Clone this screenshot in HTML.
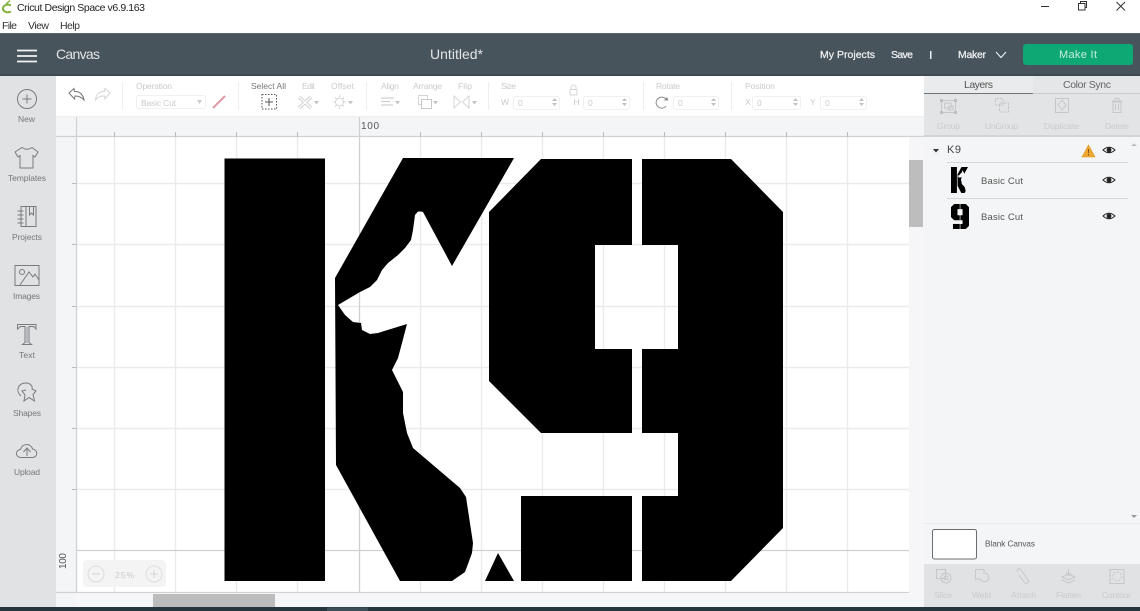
<!DOCTYPE html>
<html><head><meta charset="utf-8"><title>Cricut Design Space</title>
<style>
html,body{margin:0;padding:0;width:1140px;height:611px;overflow:hidden;background:#fff}
svg{display:block;font-family:"Liberation Sans",sans-serif;filter:blur(.35px)}
.d{fill:#c9cacc;font-size:8.5px}
.s{fill:#777;font-size:8.5px}
.g{fill:none;stroke:#ebebed;stroke-width:1.4}
.i{fill:none;stroke:#787c7f;stroke-width:1}
.f{fill:none;stroke:#d4d5d7;stroke-width:1}
.b{fill:none;stroke:#c6c7c9;stroke-width:1}
.m{font-size:10.500px;fill:#f0f1f1;stroke:#f0f1f1;stroke-width:.25}
</style></head><body>
<svg width="1140" height="611" viewBox="0 0 1140 611" xmlns="http://www.w3.org/2000/svg">
<rect width="1140" height="611" fill="#fff"/>

<!-- title bar -->
<path d="M11 5.500C7 3.500 3 5.500 3 8.500S7 13.500 11 11.500" fill="none" stroke="#7fb13a" stroke-width="2"/>
<path d="M6 4L10 .5" stroke="#7fb13a" stroke-width="1.400"/>
<text x="17" y="11" font-size="10.500" fill="#222" textLength="128" lengthAdjust="spacing">Cricut Design Space  v6.9.163</text>
<text x="2" y="29" font-size="10.500" fill="#333" textLength="15">File</text>
<text x="28" y="29" font-size="10.500" fill="#333" textLength="21">View</text>
<text x="60" y="29" font-size="10.500" fill="#333" textLength="20">Help</text>
<path d="M1041 6.500H1049" stroke="#333" stroke-width="1"/>
<rect x="1078.500" y="3.500" width="6.500" height="6.500" fill="none" stroke="#333"/>
<path d="M1080.500 3.500V1.500H1086.500V7.500H1085" fill="none" stroke="#333"/>
<path d="M1116.500 2L1125 10.500M1125 2L1116.500 10.500" stroke="#333" stroke-width="1"/>

<!-- header -->
<rect x="0" y="33" width="1140" height="43" fill="#47545c"/>
<rect x="0" y="33" width="1140" height="1" fill="#5a666d"/>
<rect x="0" y="74.500" width="1140" height="1" fill="#333f46"/>
<path d="M17 50.500H37M17 56H37M17 61.500H37" stroke="#f1f2f2" stroke-width="1.800"/>
<text x="56" y="59" font-size="14" fill="#e2e5e6" textLength="44">Canvas</text>
<text x="430" y="59" font-size="14" fill="#e2e5e6" textLength="53">Untitled*</text>
<text x="820" y="58" class="m" textLength="55">My Projects</text>
<text x="891" y="58" class="m" textLength="22">Save</text>
<rect x="930" y="51" width="1.500" height="8" fill="#eef0f0"/>
<text x="958" y="58" class="m" textLength="28">Maker</text>
<path d="M996 52L1001 57.500L1006 52" fill="none" stroke="#eef0f0" stroke-width="1.100"/>
<rect x="1023" y="44" width="110" height="21" rx="3" fill="#0da873"/>
<text x="1059" y="58" font-size="11" fill="#c9eddd" textLength="38">Make It</text>

<!-- left sidebar -->
<rect x="0" y="76" width="56" height="531" fill="#e1e2e4"/>
<circle cx="27" cy="99" r="9.500" class="i"/>
<path d="M27 94.500V103.500M22.500 99H31.500" class="i"/>
<text x="18" y="122" class="s" textLength="17">New</text>

<path d="M15 152L22 147.500Q27 151 32 147.500L38 152L35 157L33 155.500V168H20V155.500L18 157Z" class="i"/>
<text x="8" y="181" class="s" textLength="38">Templates</text>

<rect x="21" y="206.500" width="15" height="20" class="i"/>
<path d="M26 206.500V226.500M17.500 211H23.500M17.500 215H23.500M17.500 219H23.500M17.500 223H23.500M29.500 207V215L31.500 213L33.500 215V207" class="i"/>
<text x="12" y="240" class="s" textLength="30">Projects</text>

<rect x="15" y="265.500" width="24" height="20" class="i"/>
<circle cx="22" cy="272" r="2.500" class="i"/>
<path d="M20 285L29 272L33 277L35 274L39 280" class="i"/>
<text x="13" y="299" class="s" textLength="27">Images</text>

<path d="M17.500 329V324.500H36V329L33.500 326.500H29V342.500L31.500 344.500H22.500L25 342.500V326.500H20.500Z" class="i"/>
<path d="M27 327V343" stroke="#787c7f" stroke-width=".8"/>
<text x="19" y="358" class="s" textLength="16">Text</text>

<path d="M21 396C15 391 18 383 26 383C30 383 33 386 32 389L36 391L33 394.500L34.500 401L29 397.500L24 401L25 395L22 391L26 390" class="i"/>
<text x="13" y="416" class="s" textLength="28">Shapes</text>

<path d="M21 457.500C15 457.500 15 450 20.500 449.500C22 443 31 443 32.500 449C38 449.500 38.500 457.500 32 457.500Z" class="i"/>
<path d="M27 456V449M23.500 452L27 448L30.500 452" class="i"/>
<text x="14" y="475" class="s" textLength="26">Upload</text>

<!-- toolbar -->
<rect x="56" y="76" width="868" height="41" fill="#fff"/>
<path d="M69 93L74 88.500L74.500 91.500C79 91 83 94 84 100C81 96.500 78 96 75 96L74.500 99Z" fill="none" stroke="#777" stroke-width="1"/>
<path d="M110 93L105 88.500L104.500 91.500C100 91 96 94 95.500 100C98 96.500 101 96 104.500 96L105 99Z" class="f"/>
<path d="M122.500 82V110M238.500 82V110M366.500 82V110M488.500 82V110M643.500 82V110M731.500 82V110" stroke="#eeeeef" stroke-width="1"/>

<text x="136" y="89" class="d" textLength="36">Operation</text>
<rect x="136.500" y="95.500" width="69" height="13" rx="2" fill="#fff" stroke="#f0f0f0"/>
<text x="141" y="106" class="d" textLength="35">Basic Cut</text>
<path d="M197 100H202L199.500 104Z" fill="#ccc"/>
<path d="M213 108L225 96" stroke="#e09aa4" stroke-width="2"/>

<text x="251" y="89" class="s" textLength="35">Select All</text>
<rect x="262" y="94.500" width="14.500" height="14.500" fill="none" stroke="#555" stroke-width="1" stroke-dasharray="1.500 1.500"/>
<path d="M269 98V106M265 102H273" stroke="#555" stroke-width="1"/>

<text x="302" y="89" class="d" textLength="13">Edit</text>
<path d="M299 97L311 108M311 97L299 108" stroke="#cfd0d2" stroke-width="3.500"/>
<path d="M299 97L311 108M311 97L299 108" stroke="#fff" stroke-width="1.500"/>
<path d="M314 101H319L316.500 104.500Z" fill="#c4c5c7"/>
<text x="331" y="89" class="d" textLength="23">Offset</text>
<circle cx="339.500" cy="102" r="4" class="f"/>
<path d="M339.500 95V97M339.500 107V109M333 102H335M344 102H346M335 97.500L336.500 99M342.500 105L344 106.500M344 97.500L342.500 99M336.500 105L335 106.500" class="f"/>
<path d="M348 101H353L350.500 104.500Z" fill="#c4c5c7"/>

<text x="381" y="89" class="d" textLength="18">Align</text>
<path d="M381 98H394M381 101.500H390M381 105H393" stroke="#cfd0d2" stroke-width="1.300"/>
<path d="M395 101H400L397.500 104.500Z" fill="#c4c5c7"/>
<text x="413" y="89" class="d" textLength="29">Arrange</text>
<rect x="418.500" y="95.500" width="9" height="9" class="f"/>
<rect x="421.500" y="99.500" width="10" height="9" fill="#fff" stroke="#c6c7c9"/>
<path d="M433 101H438L435.500 104.500Z" fill="#c4c5c7"/>
<text x="458" y="89" class="d" textLength="14">Flip</text>
<path d="M454 96V108L460.500 102ZM469 96V108L462.500 102Z" class="f"/>
<path d="M472 101H477L474.500 104.500Z" fill="#c4c5c7"/>

<text x="501" y="89" class="d" textLength="15">Size</text>
<text x="501" y="105" class="d" textLength="7">W</text>
<rect x="513.500" y="96.500" width="46" height="13" rx="2" fill="#fff" stroke="#f0f0f0"/>
<text x="518" y="106" class="d">0</text>
<path d="M552 101L554.500 98L557 101ZM552 103L554.500 106L557 103Z" fill="#c0c1c3"/>
<rect x="570" y="89.500" width="7" height="5.500" rx="1" class="f"/>
<path d="M571 89.500V87.500A2.500 2.500 0 0 1 576 87.500V89.500" class="f"/>
<text x="573.500" y="105" class="d">H</text>
<rect x="583.500" y="96.500" width="46" height="13" rx="2" fill="#fff" stroke="#f0f0f0"/>
<text x="588" y="106" class="d">0</text>
<path d="M622 101L624.500 98L627 101ZM622 103L624.500 106L627 103Z" fill="#c0c1c3"/>

<text x="656" y="89" class="d" textLength="24">Rotate</text>
<path d="M666 106A5.500 5.500 0 1 1 666.500 100" fill="none" stroke="#8a8c8e" stroke-width="1"/>
<path d="M664 100.500L668.500 100.500L667 97Z" fill="#8a8c8e"/>
<rect x="673.500" y="96.500" width="45" height="13" rx="2" fill="#fff" stroke="#f0f0f0"/>
<text x="678" y="106" class="d">0</text>
<path d="M711 101L713.500 98L716 101ZM711 103L713.500 106L716 103Z" fill="#c0c1c3"/>

<text x="745" y="89" class="d" textLength="30">Position</text>
<text x="745" y="105" class="d">X</text>
<rect x="752.500" y="96.500" width="48" height="13" rx="2" fill="#fff" stroke="#f0f0f0"/>
<text x="757" y="106" class="d">0</text>
<path d="M793 101L795.500 98L798 101ZM793 103L795.500 106L798 103Z" fill="#c0c1c3"/>
<text x="810" y="105" class="d">Y</text>
<rect x="820.500" y="96.500" width="46" height="13" rx="2" fill="#fff" stroke="#f0f0f0"/>
<text x="825" y="106" class="d">0</text>
<path d="M859 101L861.500 98L864 101ZM859 103L861.500 106L864 103Z" fill="#c0c1c3"/>

<!-- rulers -->
<rect x="56" y="117" width="868" height="19" fill="#f4f5f7"/>
<rect x="56" y="117" width="20" height="490" fill="#f4f5f7"/>
<rect x="56" y="116" width="868" height="1" fill="#eeeef0"/>

<!-- canvas grid -->
<rect x="76" y="137" width="833" height="455" fill="#fff"/>
<path class="g" d="M114.500 137V592M175.500 137V592M236.500 137V592M297.500 137V592M420.500 137V592M481.500 137V592M542.500 137V592M603.500 137V592M664.500 137V592M725.500 137V592M786.500 137V592M847.500 137V592"/>
<path class="g" d="M76 183.500H909M76 244.500H909M76 306.500H909M76 367.500H909M76 428.500H909M76 489.500H909"/>
<path d="M359.500 117V592M76.500 117V592M56 136.500H924M76 550.500H909M56 592.500H909" fill="none" stroke="#d0d1d3" stroke-width="1.300"/>
<path d="M114.500 132V137M175.500 132V137M236.500 132V137M297.500 132V137M420.500 132V137M481.500 132V137M542.500 132V137M603.500 132V137M664.500 132V137M725.500 132V137M786.500 132V137M847.500 132V137M72 183.500H76M72 244.500H76M72 306.500H76M72 367.500H76M72 428.500H76M72 489.500H76" stroke="#bbb" stroke-width="1"/>
<text x="361" y="129" font-size="10" fill="#555" textLength="18">100</text>
<text transform="translate(66 569) rotate(-90)" font-size="10" fill="#555" textLength="16">100</text>

<!-- artwork -->
<rect x="224.500" y="158.500" width="100.500" height="422.500" fill="#000"/>
<path fill="#000" d="M403 158H514L452 266L423 212L421 211.500H418L415 215L413 230L411 240L405 248L398 255L388 263L382 270L377 280L370 287L360 292L338 305L345 315L353 322L361 323L362 330L370 334L378 333L407 324L402 343L398 358L392 370L403 392L403 413L407 433L413 448L460 488L466 497L473 543L472 553L465 572L452 581H400L336 465L335 278Z"/>
<path fill="#000" d="M498 553L514 581H485Z"/>
<path fill="#000" d="M541 159H632V245H595V349H632V433H541L489 381V212Z"/>
<path fill="#000" d="M642 159H731L783 212V528L731 581H642V496H678V433H642V349H678V245H642Z"/>
<rect x="521" y="496" width="111" height="85" fill="#000"/>

<!-- scrollbars -->
<rect x="76" y="593" width="848" height="14" fill="#f6f6f8"/>
<rect x="153" y="594" width="122" height="13" fill="#bcbcbc"/>
<rect x="909" y="137" width="15" height="456" fill="#f6f6f8"/>
<rect x="909" y="160" width="14" height="67" fill="#bdbdbd"/>
<rect x="0" y="607" width="1140" height="4" fill="#25363f"/>
<rect x="327" y="607.500" width="41" height="3.500" fill="#3c4e58"/>

<!-- zoom -->
<rect x="83" y="560" width="83" height="27" rx="4" fill="#f3f3f4" fill-opacity=".9"/>
<circle cx="96" cy="574" r="8" fill="none" stroke="#dcdcde"/>
<path d="M92 574H100" stroke="#d2d3d5"/>
<circle cx="154" cy="574" r="8" fill="none" stroke="#dcdcde"/>
<path d="M150 574H158M154 570V578" stroke="#d2d3d5"/>
<text x="115" y="578" class="d" textLength="19">25%</text>

<!-- right panel -->
<rect x="924" y="76" width="216" height="531" fill="#f4f5f6"/>
<rect x="924" y="76" width="109" height="17" fill="#eaebec"/>
<rect x="1033" y="76" width="107" height="17" fill="#e5e6e8"/>
<rect x="924" y="93" width="216" height="1" fill="#c9cacb"/>
<rect x="924" y="93" width="109" height="1" fill="#6f767b"/>
<text x="964" y="88" font-size="10.500" fill="#555" textLength="29">Layers</text>
<text x="1063" y="88" font-size="10.500" fill="#666" textLength="48">Color Sync</text>
<rect x="924" y="94" width="216" height="41" fill="#e3e4e6"/>
<rect x="924" y="135" width="216" height="2" fill="#d2d3d5"/>
<rect x="941.500" y="100.500" width="14" height="12" class="b"/>
<rect x="944.500" y="103" width="6.500" height="5" class="b"/>
<path d="M949 106H953V110H948Z" class="b"/>
<rect x="940" y="99" width="3" height="3" fill="#bdbec0"/><rect x="954" y="99" width="3" height="3" fill="#bdbec0"/><rect x="940" y="111" width="3" height="3" fill="#bdbec0"/><rect x="954" y="111" width="3" height="3" fill="#bdbec0"/>
<path d="M995.500 98.500H1003V105H995.500ZM999.500 103H1008.500V112H999.500Z" class="b" stroke-dasharray="3 1"/>
<rect x="1055.500" y="98.500" width="13" height="14" class="b"/>
<path d="M1058 105L1062 100L1066 105L1062 110Z" class="b"/>
<path d="M1113 102H1121V112.500H1113ZM1111.500 101H1122.500M1115 101V98.500H1119V101M1115.500 104V110M1118.500 104V110" class="b"/>
<text x="937" y="129" class="d" textLength="23">Group</text>
<text x="985" y="129" class="d" textLength="33">UnGroup</text>
<text x="1044" y="129" class="d" textLength="35">Duplicate</text>
<text x="1105" y="129" class="d" textLength="24">Delete</text>

<!-- layer list -->
<path d="M933 149H939L936 152.500Z" fill="#333"/>
<text x="947" y="153" font-size="11" fill="#444" textLength="14">K9</text>
<path d="M1088.500 145L1095 157H1082Z" fill="#f0a72f" stroke="#d99a2c" stroke-width=".6"/>
<path d="M1088.500 149V153M1088.500 154V155.500" stroke="#7a5a1a" stroke-width="1"/>
<path d="M947 162.500H1128M947 198.500H1128" stroke="#d5d6d8" stroke-width="1"/>
<path d="M1103 150Q1109 144.500 1115 150Q1109 155.500 1103 150Z" fill="none" stroke="#222" stroke-width="1"/><circle cx="1109" cy="150" r="2.400" fill="#222"/>
<path d="M1103 180Q1109 174.500 1115 180Q1109 185.500 1103 180Z" fill="none" stroke="#222" stroke-width="1"/><circle cx="1109" cy="180" r="2.400" fill="#222"/>
<path d="M1103 216Q1109 210.500 1115 216Q1109 221.500 1103 216Z" fill="none" stroke="#222" stroke-width="1"/><circle cx="1109" cy="216" r="2.400" fill="#222"/>
<text x="981" y="184" font-size="9.500" fill="#555" textLength="42">Basic Cut</text>
<text x="981" y="220" font-size="9.500" fill="#555" textLength="42">Basic Cut</text>
<!-- layer thumbnails -->
<g transform="translate(951 167) scale(.0586 .0615) translate(-224 -158)" fill="#000">
<rect x="224" y="158" width="101" height="423"/>
<path d="M403 158H514L452 266L423 212L418 212L411 240L398 255L382 270L370 287L338 305L353 322L362 330L407 324L392 370L403 392L407 433L460 488L473 543L465 572L452 581H400L336 465L335 278Z"/>
</g>
<g transform="translate(951 204) scale(.0612 .0592) translate(-489 -159)" fill="#000">
<path d="M541 159H632V245H595V349H632V433H541L489 381V212Z"/>
<path d="M642 159H731L783 212V528L731 581H642V496H678V433H642V349H678V245H642Z"/>
<rect x="521" y="496" width="111" height="85"/>
</g>
<path d="M1131 146H1137L1134 143.500Z" fill="#bbb"/>
<path d="M1131 515H1137L1134 518Z" fill="#999"/>
<rect x="924" y="523" width="216" height="1" fill="#e9eaeb"/>

<!-- blank canvas -->
<rect x="932.500" y="529.500" width="44" height="29.500" rx="2" fill="#fff" stroke="#6a6d70" stroke-width="1"/>
<text x="985" y="546.500" font-size="8.200" fill="#555" textLength="50">Blank Canvas</text>

<!-- bottom tools -->
<rect x="924" y="564" width="216" height="43" fill="#e1e2e4"/>
<rect x="936.500" y="569.500" width="9" height="9" class="b"/>
<circle cx="946" cy="578" r="5" class="b"/><circle cx="946" cy="578" r="2" class="b"/>
<path d="M975.500 569.500H984V573C988 573 990 577 988 580C986 582.500 982 582.500 980.500 579H975.500Z" class="b"/>
<path d="M1018 572C1016 569 1019 567.500 1021 570L1028 580C1030 583 1026 584.500 1024 582L1019 575" class="b"/>
<path d="M1068.500 569V575M1066 573L1068.500 575.500L1071 573M1062 577L1068.500 574L1075 577L1068.500 580ZM1062 580L1068.500 583L1075 580" class="b"/>
<rect x="1110" y="569.500" width="14" height="14" class="b"/>
<circle cx="1117" cy="576.500" r="4.500" class="b" stroke-dasharray="2 1.500"/>
<text x="934" y="598" class="d" textLength="18">Slice</text>
<text x="972" y="598" class="d" textLength="19">Weld</text>
<text x="1011" y="598" class="d" textLength="25">Attach</text>
<text x="1056" y="598" class="d" textLength="25">Flatten</text>
<text x="1102" y="598" class="d" textLength="29">Contour</text>
</svg>
</body></html>
